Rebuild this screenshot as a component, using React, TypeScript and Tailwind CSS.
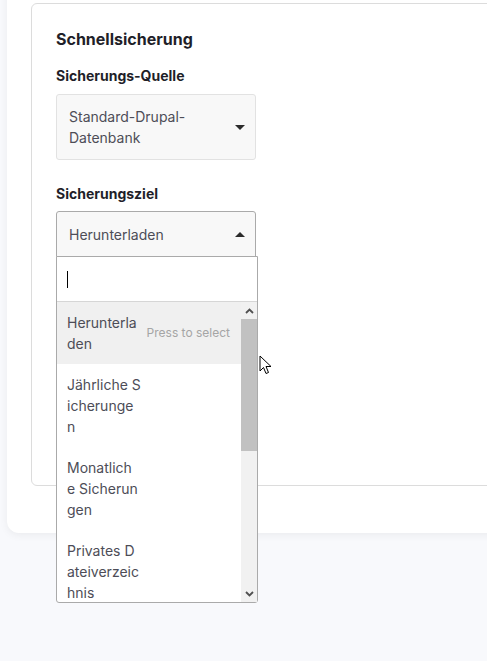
import React from "react";

function Caret({ up }: { up?: boolean }) {
  return (
    <svg width="10" height="5" viewBox="0 0 10 5" className="shrink-0">
      {up ? <path d="M0 5 L5 0 L10 5 Z" fill="#2b2b2b" /> : <path d="M0 0 L10 0 L5 5 Z" fill="#2b2b2b" />}
    </svg>
  );
}

const items = [
  { lines: ["Herunterla", "den"], active: true },
  { lines: ["Jährliche S", "icherunge", "n"] },
  { lines: ["Monatlich", "e Sicherun", "gen"] },
  { lines: ["Privates D", "ateiverzeic", "hnis"] },
];

export default function App() {
  return (
    <div className="min-h-[661px] bg-[#f8f9fc] overflow-hidden font-['Inter',sans-serif] relative">
      <div className="ml-[7px] w-[520px] -mt-[20px] pt-[23px] pl-[24px] pb-[47px] bg-white rounded-[12px] shadow-[0_2px_8px_rgba(0,0,0,0.06)]">
        <div className="border border-[#dcdcdc] rounded-[6px] pt-[23px] pl-[24px] h-[483px]">
          <h2 className="text-[16px] leading-[24px] font-bold text-[#1f1f29]">Schnellsicherung</h2>
          <div className="mt-[15px] text-[14px] leading-[20px] font-bold text-[#1f1f29]">Sicherungs-Quelle</div>
          <div className="mt-[8px] w-[200px] h-[66px] bg-[#f8f8f8] border border-[#e2e2e2] rounded-[3px] flex items-center pl-[12px] pr-[10px]">
            <div className="flex-1 text-[14px] leading-[21px] text-[#4d4d57] pr-[20px]">Standard-Drupal-Datenbank</div>
            <Caret />
          </div>
          <div className="mt-[24px] text-[14px] leading-[20px] font-bold text-[#1f1f29]">Sicherungsziel</div>
          <div className="relative mt-[7px] w-[200px]">
            <div className="h-[46px] bg-[#f8f8f8] border border-[#aaaaaa] rounded-t-[3px] flex items-center pl-[12px] pr-[10px]">
              <div className="flex-1 text-[14px] leading-[21px] text-[#4d4d57]">Herunterladen</div>
              <Caret up />
            </div>
            <div className="absolute left-0 top-[calc(100%-1px)] w-[202px] bg-white border border-[#aaaaaa] rounded-b-[3px] z-10">
              <div className="h-[45px] border-b border-[#d6d6d6] flex items-center pl-[10px]">
                <div className="w-px h-[17px] bg-black" />
              </div>
              <div className="flex h-[300px]">
                <div className="flex-1 overflow-hidden">
                  {items.map((it) => (
                    <div
                      key={it.lines.join("")}
                      className={`flex items-center py-[10px] pl-[10px] pr-[11px] ${it.active ? "bg-[#f0f0f0]" : ""}`}
                    >
                      <div className="w-[76px] text-[14px] leading-[21px] text-[#4d4d57] whitespace-nowrap">
                        {it.lines.map((l) => (
                          <div key={l}>{l}</div>
                        ))}
                      </div>
                      {it.active && (
                        <div className="ml-auto text-[12px] leading-[16px] text-[#a5a5a5] whitespace-nowrap">Press to select</div>
                      )}
                    </div>
                  ))}
                </div>
                <div className="w-[16px] bg-[#f1f1f1] flex flex-col">
                  <div className="h-[17px] flex items-center justify-center">
                    <svg width="9" height="6" viewBox="0 0 9 6"><path d="M1 5 L4.5 1.5 L8 5" stroke="#505050" strokeWidth="1.8" fill="none" /></svg>
                  </div>
                  <div className="h-[132px] bg-[#c1c1c1]" />
                  <div className="flex-1" />
                  <div className="h-[17px] flex items-center justify-center">
                    <svg width="9" height="6" viewBox="0 0 9 6"><path d="M1 1 L4.5 4.5 L8 1" stroke="#505050" strokeWidth="1.8" fill="none" /></svg>
                  </div>
                </div>
              </div>
            </div>
          </div>
        </div>
      </div>
      <svg className="absolute left-[259px] top-[355px]" width="14" height="20" viewBox="0 0 14 20">
        <path d="M1 1 L1 16 L4.5 12.5 L7 18.5 L9.5 17.5 L7 11.5 L12 11.5 Z" fill="white" stroke="black" strokeWidth="1" strokeLinejoin="round" />
      </svg>
    </div>
  );
}
